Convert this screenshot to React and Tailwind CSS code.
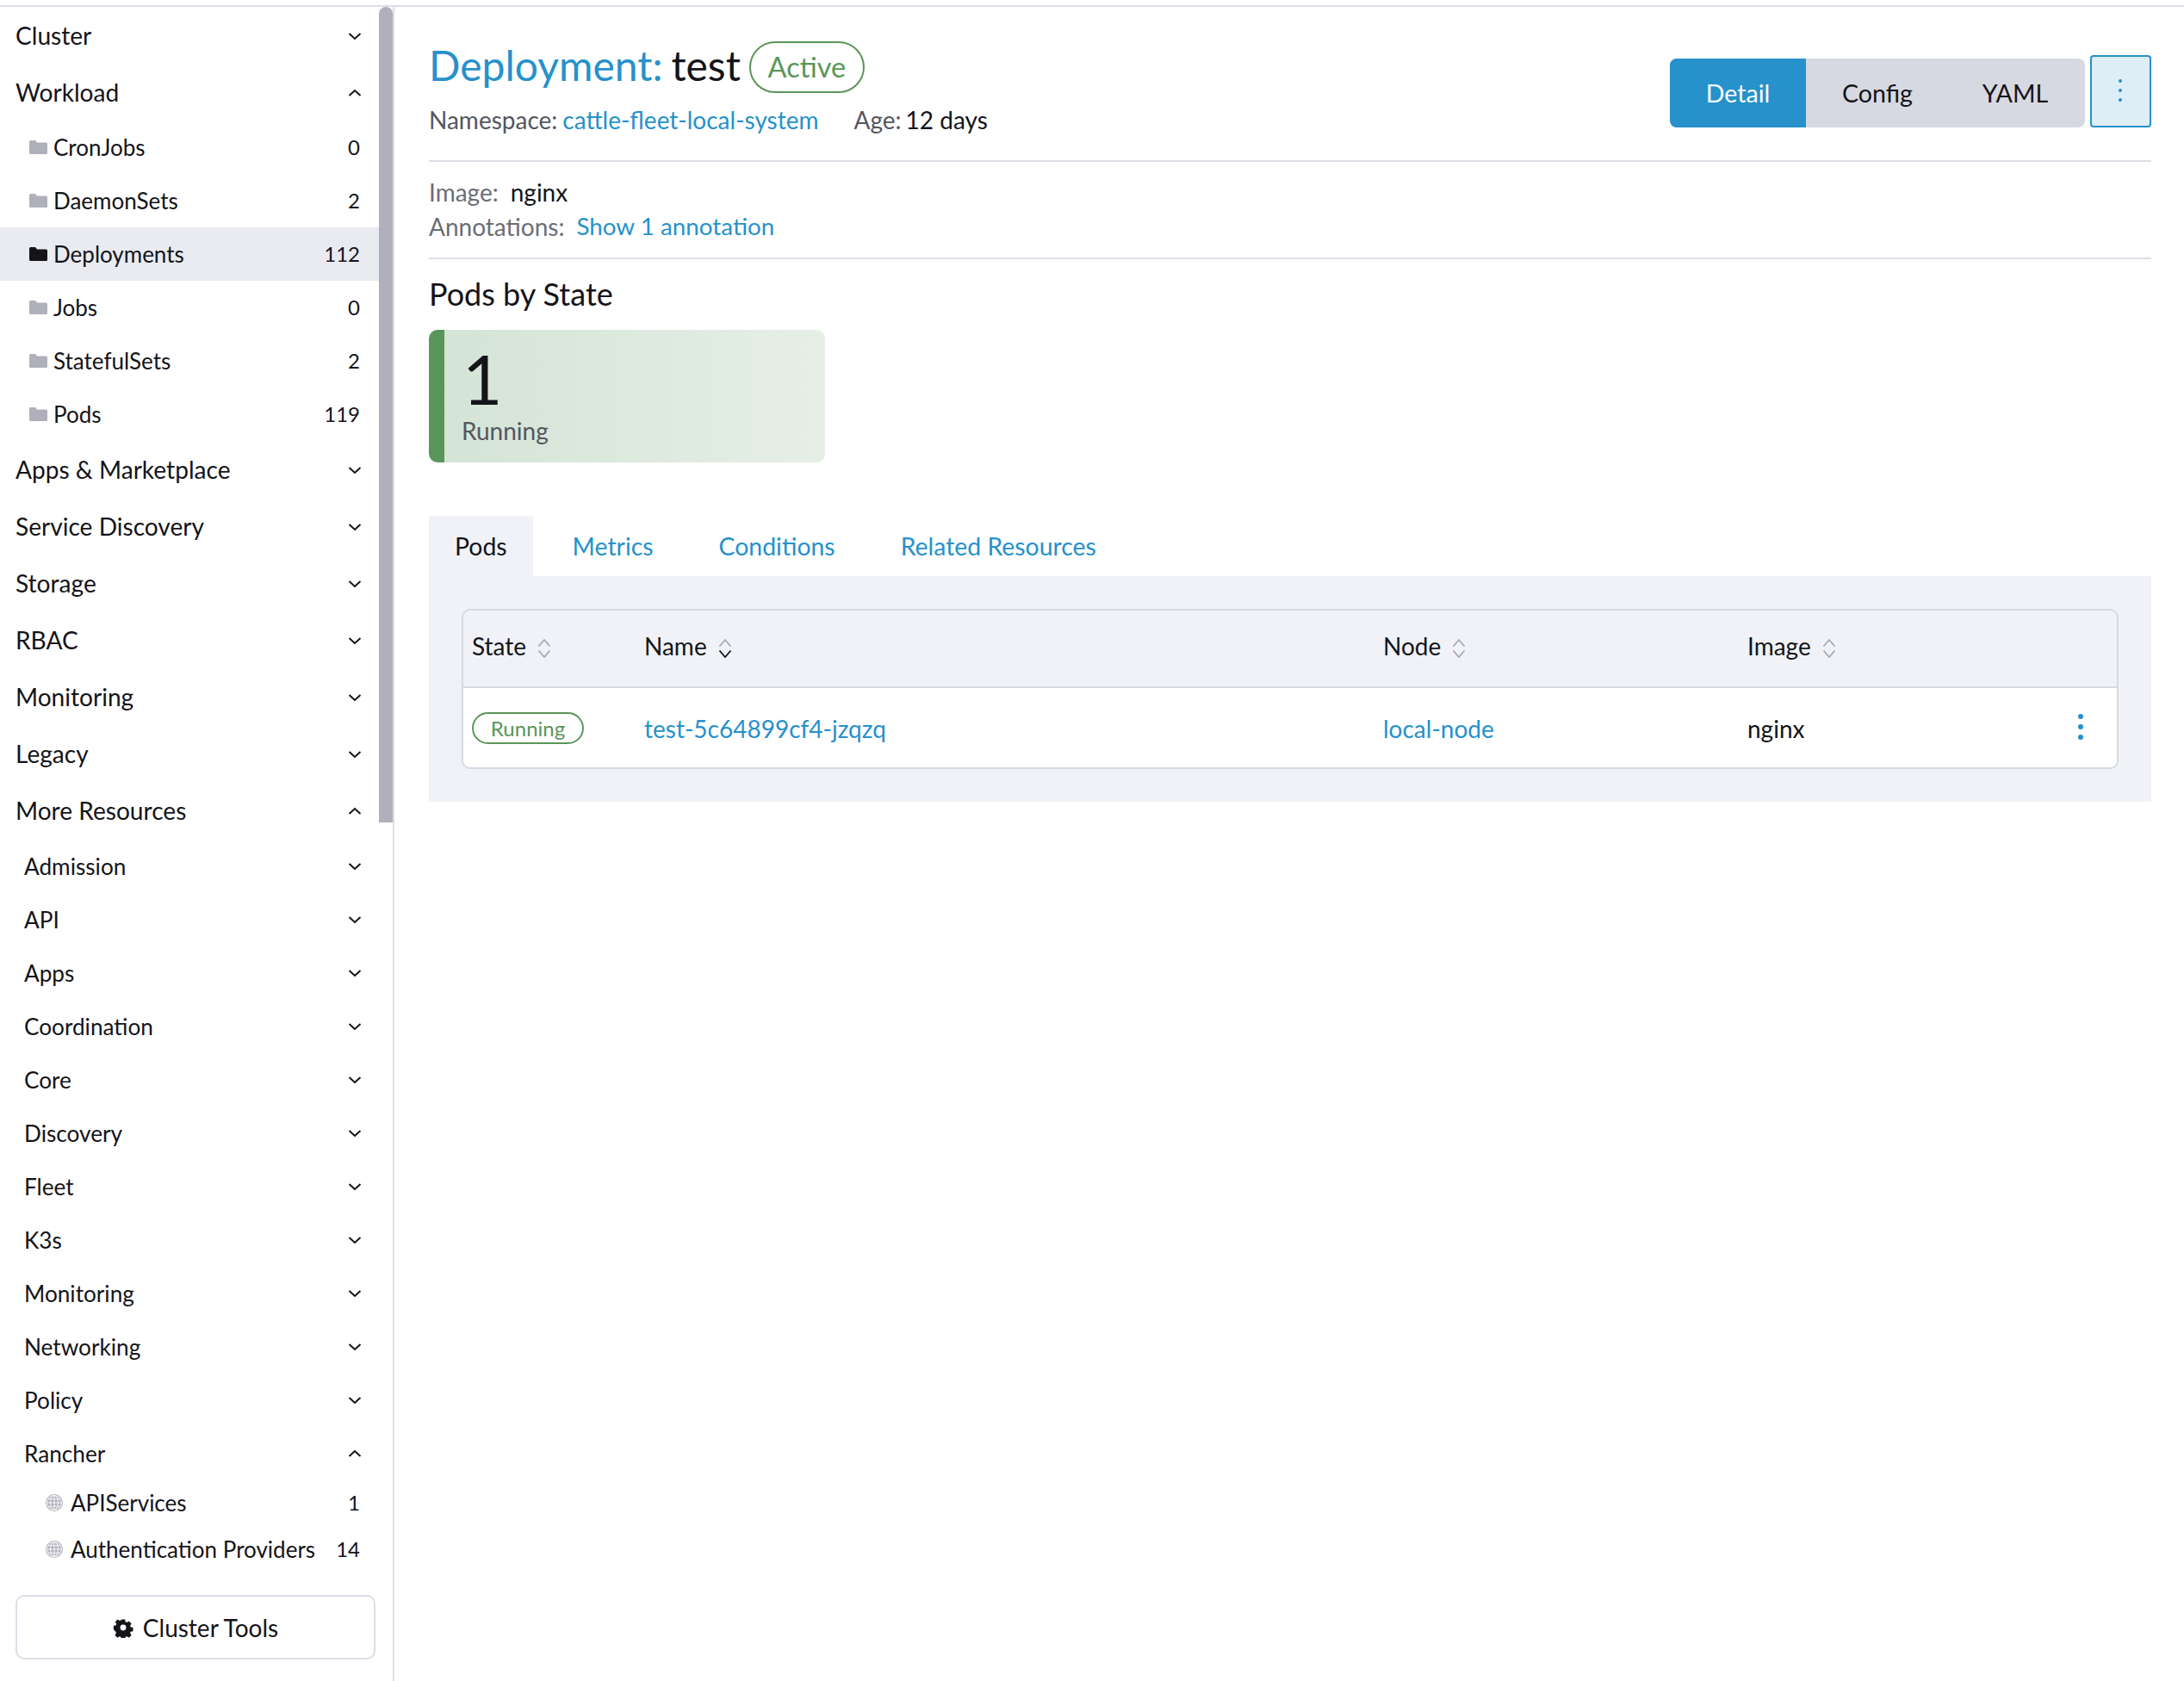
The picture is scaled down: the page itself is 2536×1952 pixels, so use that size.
import React from "react";

const Chevron = ({ up }) => (
  <svg width="16" height="10" viewBox="0 0 16 10" fill="none" stroke="#141419" strokeWidth="2" className="shrink-0">
    <path d={up ? "M1.500 8 L8 2 L14.500 8" : "M1.500 2 L8 8 L14.500 2"} />
  </svg>
);

const Folder = ({ dark }) => (
  <svg width="21" height="16" viewBox="0 0 21 16" className="shrink-0">
    <path d="M0 1.500 A1.500 1.500 0 0 1 1.500 0 H7 L9 2.500 H19.500 A1.500 1.500 0 0 1 21 4 V14.500 A1.500 1.500 0 0 1 19.500 16 H1.500 A1.500 1.500 0 0 1 0 14.500 Z" fill={dark ? "#141419" : "#b0b0bc"} />
  </svg>
);

const Globe = () => (
  <svg width="20" height="20" viewBox="0 0 20 20" className="shrink-0">
    <circle cx="10" cy="10" r="10" fill="#b0b0bc" />
    <g fill="none" stroke="#fff" strokeWidth="0.900">
      <ellipse cx="10" cy="10" rx="4.500" ry="8.500" />
      <circle cx="10" cy="10" r="8.500" />
      <path d="M10 1.500 V18.500 M1.500 10 H18.500 M3 5.800 H17 M3 14.200 H17" />
    </g>
  </svg>
);

const Gear = () => (
  <svg width="24" height="24" viewBox="0 0 24 24" className="shrink-0">
    <path fillRule="evenodd" fill="#141419" d="M9.600 1h4.800l.7 3.200 1.900.8 2.800-1.800 3.400 3.400-1.800 2.800.8 1.900 3.200.7v4.800l-3.200.7-.8 1.900 1.800 2.800-3.400 3.400-2.800-1.800-1.900.8-.7 3.200H9.600l-.7-3.200-1.900-.8-2.800 1.800-3.400-3.400 1.800-2.800-.8-1.900L-1 14.400V9.600l3.200-.7.8-1.900L1.200 4.200 4.600 .8 7.400 2.600 9.300 1.800Z M12 8a4 4 0 1 0 0 8 4 4 0 0 0 0-8Z" transform="translate(1.700 1.700) scale(.86)" />
  </svg>
);

const Sort = ({ active }) => (
  <svg width="16" height="24" viewBox="0 0 16 24" fill="none" strokeWidth="1.800" className="shrink-0 ml-[13px]">
    <path d="M1.500 9.500 L8 2 L14.500 9.500" stroke="#a8a8b2" />
    <path d="M1.500 14.500 L8 22 L14.500 14.500" stroke={active ? "#141419" : "#a8a8b2"} />
  </svg>
);

const Group = ({ label, up }) => (
  <div className="h-[66px] pl-[18px] pr-[20px] flex items-center justify-between text-[28.1px]">
    <span className="pb-[2px]">{label}</span>
    <Chevron up={up} />
  </div>
);

const SubGroup = ({ label, up }) => (
  <div className="h-[62px] pl-[28px] pr-[20px] flex items-center justify-between text-[26.2px]">
    <span className="pt-[2px]">{label}</span>
    <Chevron up={up} />
  </div>
);

const Item = ({ label, count, active }) => (
  <div className={`h-[62px] pl-[34px] pr-[22px] flex items-center text-[26px] ${active ? "bg-[#e9ebf0]" : ""}`}>
    <Folder dark={active} />
    <span className="ml-[7px] flex-1">{label}</span>
    <span className="text-[24px]">{count}</span>
  </div>
);

const GlobeItem = ({ label, count }) => (
  <div className="h-[54px] pl-[53px] pr-[22px] flex items-center text-[26px]">
    <Globe />
    <span className="ml-[9px] flex-1">{label}</span>
    <span className="text-[24px]">{count}</span>
  </div>
);

const Dots = ({ size, gap, color }) => (
  <span className="flex flex-col items-center" style={{ gap }}>
    {[0, 1, 2].map((i) => (
      <span key={i} className="rounded-full" style={{ width: size, height: size, background: color }} />
    ))}
  </span>
);

const Th = ({ label, active, className }) => (
  <div className={`flex items-center text-[28px] ${className}`}>
    <span className="pb-[6px]">{label}</span>
    <Sort active={active} />
  </div>
);

export default function App() {
  return (
    <div className="w-[2536px] h-[1952px] bg-white text-[#141419] overflow-hidden" style={{ fontFamily: "Lato, 'Noto Sans', sans-serif" }}>
      <div className="h-[8px] border-b-2 border-[#dcdee7]" />
      <div className="flex h-[1944px]">
        <aside className="relative w-[458px] shrink-0 border-r-2 border-[#dcdee7]">
          <div className="w-[440px] pt-px">
            <Group label="Cluster" />
            <div className="-mb-px"><Group label="Workload" up /></div>
            <Item label="CronJobs" count="0" />
            <Item label="DaemonSets" count="2" />
            <Item label="Deployments" count="112" active />
            <Item label="Jobs" count="0" />
            <Item label="StatefulSets" count="2" />
            <Item label="Pods" count="119" />
            <div className="h-px" />
            <Group label="Apps & Marketplace" />
            <Group label="Service Discovery" />
            <Group label="Storage" />
            <Group label="RBAC" />
            <Group label="Monitoring" />
            <Group label="Legacy" />
            <Group label="More Resources" up />
            <SubGroup label="Admission" />
            <SubGroup label="API" />
            <SubGroup label="Apps" />
            <SubGroup label="Coordination" />
            <SubGroup label="Core" />
            <SubGroup label="Discovery" />
            <SubGroup label="Fleet" />
            <SubGroup label="K3s" />
            <SubGroup label="Monitoring" />
            <SubGroup label="Networking" />
            <SubGroup label="Policy" />
            <SubGroup label="Rancher" up />
            <div className="-mt-px">
              <GlobeItem label="APIServices" count="1" />
              <GlobeItem label="Authentication Providers" count="14" />
            </div>
            <div className="mt-[26px] ml-[18px] w-[418px] h-[75px] rounded-[10px] border-2 border-[#dcdee7] flex items-center justify-center gap-[11px] text-[28px]">
              <Gear />
              <span>Cluster Tools</span>
            </div>
          </div>
          <div className="absolute left-[440px] top-0 w-[16px] h-[947px] rounded-t-[8px] bg-[#b0b0bc]" />
        </aside>

        <main className="flex-1 pl-[40px] pr-[38px]">
          <div className="h-[180px] border-b-2 border-[#dcdee7] flex justify-between">
            <div>
              <div className="mt-[40px] h-[60px] flex items-center">
                <h1 className="text-[48px] leading-[60px] pb-[5px]">
                  <span className="text-[#2691cb]">Deployment:</span>
                  <span className="ml-[10px]">test</span>
                </h1>
                <span className="ml-[10px] h-[60px] w-[134px] rounded-[30px] border-2 border-[#5a9659] text-[#5a9659] text-[32.5px] pt-px flex items-center justify-center">Active</span>
              </div>
              <div className="mt-[11px] text-[28px] leading-[40px] flex">
                <span className="text-[#55555f]">Namespace:</span>
                <span className="ml-[6px] text-[#2691cb]">cattle-fleet-local-system</span>
                <span className="ml-[41px] text-[#55555f]">Age:</span>
                <span className="ml-[5px]">12 days</span>
              </div>
            </div>
            <div className="flex items-start mt-[56px]">
              <div className="mt-[4px] h-[80px] w-[482px] flex rounded-[8px] overflow-hidden bg-[#d7d9e2] text-[28.6px]">
                <span className="w-[158px] bg-[#2691cb] text-white flex items-center justify-center">Detail</span>
                <span className="w-[162px] pl-[4px] flex items-center justify-center">Config</span>
                <span className="w-[162px] flex items-center justify-center">YAML</span>
              </div>
              <div className="ml-[6px] w-[71px] h-[84px] rounded-[4px] border-2 border-[#2691cb] bg-[#deeef7] flex items-center justify-center pb-[3px] pr-[2px]">
                <Dots size="4px" gap="7px" color="#2691cb" />
              </div>
            </div>
          </div>

          <div className="h-[113px] border-b-2 border-[#dcdee7] pt-[15px] text-[28px] leading-[40px]">
            <div className="flex">
              <span className="text-[#6c6c76]">Image:</span>
              <span className="ml-[14px]">nginx</span>
            </div>
            <div className="flex">
              <span className="text-[#6c6c76]">Annotations:</span>
              <span className="ml-[14px] text-[#2691cb] text-[27.8px]">Show 1 annotation</span>
            </div>
          </div>

          <h2 className="mt-[18px] text-[36px] leading-[44px]">Pods by State</h2>
          <div className="mt-[20px] w-[460px] h-[154px] rounded-[10px] border-l-[18px] border-[#5a9659] bg-gradient-to-r from-[#d4e4d6] to-[#e6efe6] pl-[20px] overflow-hidden">
            <div className="text-[80px] leading-[80px] pt-[16px] pl-[1px]">1</div>
            <div className="text-[28px] leading-[36px] text-[#55555f] mt-[3px]">Running</div>
          </div>

          <div className="mt-[62px] flex gap-[16px] text-[28.4px] h-[70px]">
            <span className="px-[30px] bg-[#f0f2f7] flex items-center pt-px">Pods</span>
            <span className="px-[30px] text-[#2691cb] flex items-center pt-px">Metrics</span>
            <span className="px-[30px] text-[#2691cb] flex items-center pt-px">Conditions</span>
            <span className="px-[30px] text-[#2691cb] flex items-center pt-px">Related Resources</span>
          </div>
          <div className="h-[262px] bg-[#f0f2f7] pt-[38px] pl-[38px] pr-[38px]">
            <div className="h-[186px] rounded-[10px] border-2 border-[#d7d9e2] overflow-hidden">
              <div className="h-[90px] border-b-2 border-[#d7d9e2] flex items-center">
                <Th label="State" className="w-[201px] pl-[10px]" />
                <Th label="Name" active className="w-[858px] pl-[9px]" />
                <Th label="Node" className="w-[423px] pl-[9px]" />
                <Th label="Image" className="pl-[9px]" />
              </div>
              <div className="h-[92px] bg-white flex items-center text-[28px] pt-px">
                <div className="w-[201px] pl-[10px]">
                  <span className="w-[130px] h-[37px] rounded-[19px] border-2 border-[#5a9659] text-[#5a9659] text-[24px] flex items-center justify-center">Running</span>
                </div>
                <div className="w-[858px] pl-[9px] text-[#2691cb]">test-5c64899cf4-jzqzq</div>
                <div className="w-[423px] pl-[9px] text-[#2691cb]">local-node</div>
                <div className="flex-1 pl-[9px]">nginx</div>
                <div className="pr-[39px] mt-[-3px]"><Dots size="6px" gap="6px" color="#2691cb" /></div>
              </div>
            </div>
          </div>
        </main>
      </div>
    </div>
  );
}
